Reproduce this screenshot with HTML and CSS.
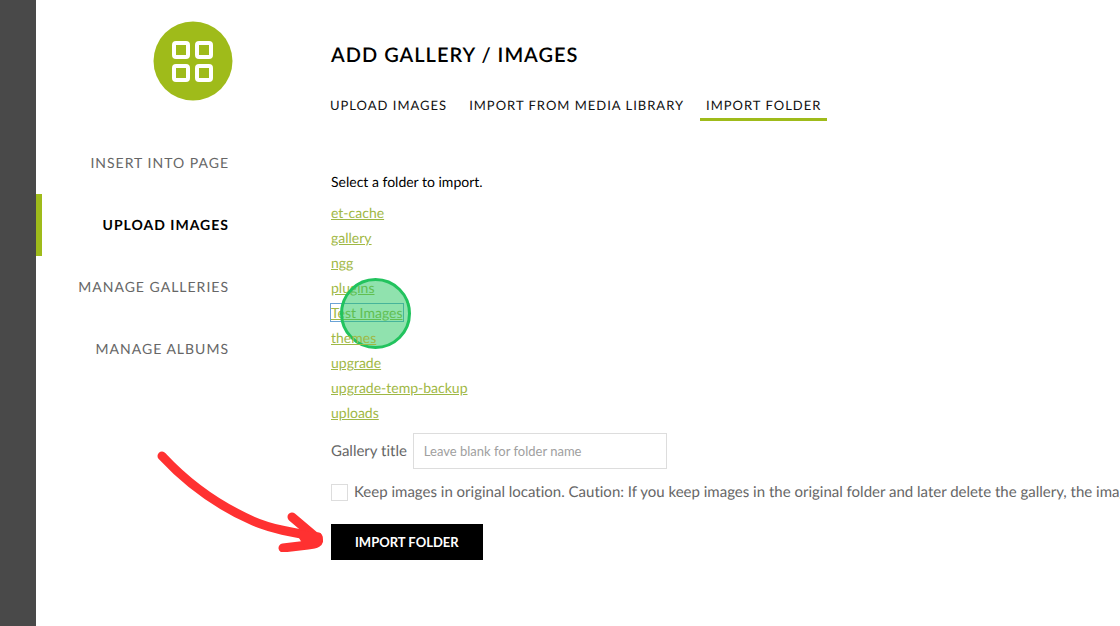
FILE: index.html
```html
<!DOCTYPE html>
<html lang="en">
<head>
  <meta charset="utf-8">
  <title>Add Gallery / Images</title>
  <link rel="stylesheet" href="styles.css">
</head>
<body>
  <div class="page">
    <aside class="sidebar">
      <svg class="logo" width="80" height="80" viewBox="0 0 80 80" aria-hidden="true">
        <circle cx="40" cy="40" r="39.5" fill="#9fbb1a"/>
        <g fill="none" stroke="#fff" stroke-width="4">
          <rect x="21" y="22" width="14" height="14" rx="2"/>
          <rect x="44" y="22" width="14" height="14" rx="2"/>
          <rect x="21" y="45" width="14" height="14" rx="2"/>
          <rect x="44" y="45" width="14" height="14" rx="2"/>
        </g>
      </svg>
      <nav class="menu">
        <a class="menu-item" href="#insert">INSERT INTO PAGE</a>
        <a class="menu-item active" href="#upload">UPLOAD IMAGES</a>
        <a class="menu-item" href="#galleries">MANAGE GALLERIES</a>
        <a class="menu-item" href="#albums">MANAGE ALBUMS</a>
      </nav>
    </aside>

    <main class="content">
      <h1>ADD GALLERY / IMAGES</h1>
      <nav class="tabs">
        <a class="tab" href="#upload-images">UPLOAD IMAGES</a>
        <a class="tab" href="#media-library">IMPORT FROM MEDIA LIBRARY</a>
        <a class="tab active" href="#import-folder">IMPORT FOLDER</a>
      </nav>

      <form>
        <p class="intro">Select a folder to import.</p>
        <ul class="folders">
          <li><a href="#et-cache">et-cache</a></li>
          <li><a href="#gallery">gallery</a></li>
          <li><a href="#ngg">ngg</a></li>
          <li><a href="#plugins">plugins</a></li>
          <li><a class="selected" href="#test-images">Test Images<span class="click-marker"></span></a></li>
          <li><a href="#themes">themes</a></li>
          <li><a href="#upgrade">upgrade</a></li>
          <li><a href="#upgrade-temp-backup">upgrade-temp-backup</a></li>
          <li><a href="#uploads">uploads</a></li>
        </ul>

        <div class="field">
          <label for="title">Gallery title</label>
          <input type="text" id="title" placeholder="Leave blank for folder name">
        </div>
        <div class="field keep">
          <input type="checkbox" id="keep">
          <label for="keep">Keep images in original location. Caution: If you keep images in the original folder and later delete the gallery, the images</label>
        </div>
        <div class="submit">
          <button type="button">IMPORT FOLDER</button>
          <svg class="arrow" width="170" height="106" viewBox="0 0 170 106" aria-hidden="true">
            <g fill="none" stroke="#ff3131" stroke-width="9" stroke-linecap="round" stroke-linejoin="round">
              <path d="M7 10C33 38 64 60 98 75C116 83 140 87 163 91"/>
              <path d="M137 71L163 93Q166 98 153 99L128 102"/>
            </g>
            <path d="M143 84L165 87Q170 92 166 98L150 102L144 92Z" fill="#ff3131"/>
          </svg>
        </div>
      </form>
    </main>
  </div>
</body>
</html>
```
FILE: styles.css
```css
* {
  box-sizing: border-box;
}

body {
  margin: 0;
  font-family: Lato, sans-serif;
  font-size: 15px;
  font-variant-ligatures: none;
  text-rendering: geometricPrecision;
  color: #000;
  background: #fff;
}

a {
  color: inherit;
  text-decoration: none;
}

.page {
  display: flex;
  min-height: 100vh;
  border-left: 36px solid #494949;
  overflow: hidden;
}

.sidebar {
  display: flex;
  flex-direction: column;
  align-items: flex-end;
  flex: 0 0 197px;
  padding-top: 21px;
}

.menu {
  width: 100%;
  margin-top: 31px;
}

.menu-item {
  display: block;
  padding-right: 4px;
  border-left: 6px solid transparent;
  font-size: 14px;
  line-height: 62px;
  letter-spacing: 1px;
  text-align: right;
  color: #666;
}

.menu-item.active {
  border-color: #9fbb1a;
  font-weight: bold;
  color: #000;
}

.content {
  flex: 1;
  min-width: 0;
  padding: 42px 0 40px 98px;
}

h1 {
  margin: 0;
  font-size: 20px;
  font-weight: 600;
  line-height: 26px;
  letter-spacing: 1px;
}

.tabs {
  display: flex;
  gap: 10px;
  margin: 24px 0 0 -7px;
}

.tab {
  padding: 0 6px;
  border-bottom: 3px solid transparent;
  font-size: 13px;
  line-height: 26px;
  letter-spacing: 1px;
  color: #111;
}

.tab.active {
  border-bottom-color: #9fbb1a;
}

.intro {
  margin: 51px 0 0;
  font-size: 14px;
  line-height: 20px;
}

.folders {
  margin: 8px 0 0;
  padding: 0;
  list-style: none;
  font-size: 14px;
  line-height: 25px;
}

.folders li {
  height: 25px;
}

.folders a {
  position: relative;
  text-decoration: underline;
  color: #9fb845;
}

.folders .selected {
  outline: 1px solid #6ba3d6;
}

/* click highlight over the selected folder */
.click-marker {
  position: absolute;
  top: -26px;
  left: 9px;
  width: 71px;
  height: 71px;
  border: 3px solid #22c35e;
  border-radius: 50%;
  background: rgba(34, 197, 94, 0.5);
}

.field {
  display: flex;
  align-items: center;
  gap: 6px;
  margin-top: 8px;
  color: #666;
  white-space: nowrap;
}

input[type="text"] {
  width: 254px;
  height: 36px;
  padding: 0 10px;
  border: 1px solid #ddd;
  font-family: inherit;
  font-size: 13px;
}

input::placeholder {
  color: #a0a0a0;
}

.keep {
  margin-top: 14px;
}

input[type="checkbox"] {
  appearance: none;
  flex: none;
  width: 17px;
  height: 17px;
  margin: 0;
  border: 1px solid #ddd;
  background: #fff;
}

.submit {
  position: relative;
  margin-top: 23px;
}

button {
  padding: 0 24px;
  border: none;
  font-family: inherit;
  font-size: 13px;
  font-weight: bold;
  line-height: 36px;
  color: #fff;
  background: #000;
}

.arrow {
  position: absolute;
  top: -78px;
  left: -176px;
}
```
